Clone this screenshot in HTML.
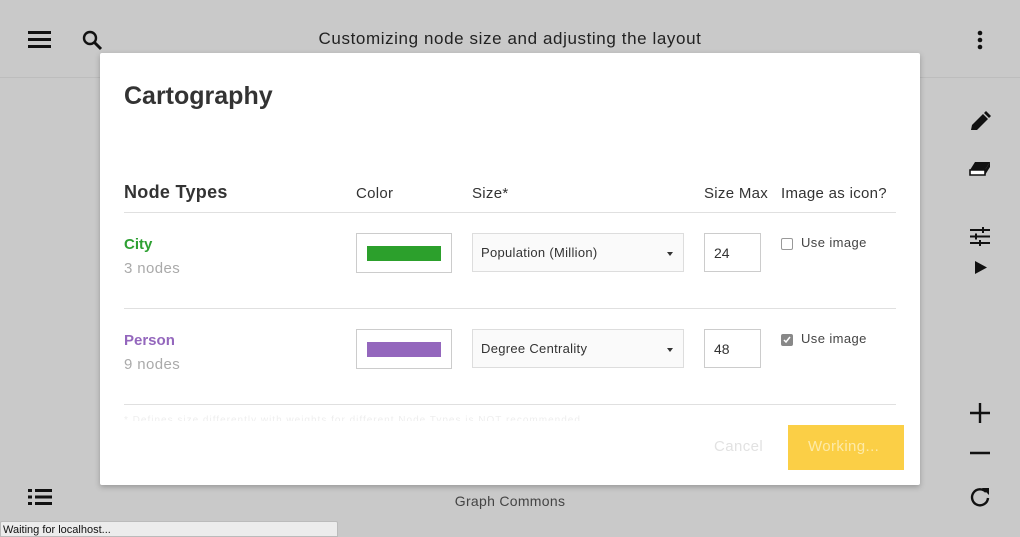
<!DOCTYPE html>
<html><head><meta charset="utf-8"><style>
*{margin:0;padding:0;box-sizing:border-box}
body{width:1020px;height:536px;overflow:hidden;background:#c9c9c9;font-family:"Liberation Sans",sans-serif;position:relative;color:#222}
.abs{position:absolute}
.hline{position:absolute;left:0;width:1020px;top:77px;height:1px;background:#bdbdbd}
.modal{position:absolute;left:100px;top:53px;width:820px;height:432px;background:#fff;border-radius:2px;box-shadow:0 2px 6px rgba(0,0,0,.25)}
.sep{position:absolute;left:24px;width:772px;height:1px;background:#e0e0e0}
.th{position:absolute;top:132px;font-size:15px;color:#333;letter-spacing:.3px}
.sw{position:absolute;left:256px;width:96px;height:40px;border:1px solid #ccc;background:#fff}
.sw div{position:absolute;left:10px;top:12px;width:74px;height:15px}
.sel{position:absolute;left:372px;width:212px;height:39px;border:1px solid #ddd;background:#fafafa;font-size:13px;color:#333;padding:11px 8px;letter-spacing:.3px}
.sel:after{content:"";position:absolute;right:10px;top:18px;border-left:3px solid transparent;border-right:3px solid transparent;border-top:4px solid #333}
.num{position:absolute;left:604px;width:57px;height:39px;border:1px solid #ccc;font-size:14px;color:#333;padding:11px 9px}
.cb{position:absolute;left:681px;width:12px;height:12px;border:1px solid #999;border-radius:2px}
.ui{position:absolute;left:701px;font-size:13px;color:#444;letter-spacing:.4px}
</style></head><body>
<div class="hline"></div>
<svg class="abs" style="left:28px;top:31px" width="24" height="17"><rect y="0" width="23" height="3" fill="#111"/><rect y="7" width="23" height="3" fill="#111"/><rect y="14" width="23" height="3" fill="#111"/></svg>
<svg class="abs" style="left:81px;top:29px" width="24" height="24"><circle cx="9" cy="9" r="6" fill="none" stroke="#111" stroke-width="2.4"/><path d="M13 13l7 7" stroke="#111" stroke-width="3"/></svg>
<div class="abs" style="left:0;width:1020px;top:29px;text-align:center;font-size:17px;letter-spacing:.6px;color:#222">Customizing node size and adjusting the layout</div>
<svg class="abs" style="left:977px;top:30px" width="6" height="20"><circle cx="3" cy="3" r="2.3" fill="#111"/><circle cx="3" cy="10" r="2.3" fill="#111"/><circle cx="3" cy="17" r="2.3" fill="#111"/></svg>
<svg class="abs" style="left:968px;top:110px" width="24" height="24"><path d="M3 20l1-5L15 4l5 5L9 20z" fill="#111"/><path d="M16 3l2-2 5 5-2 2z" fill="#111"/></svg>
<svg class="abs" style="left:968px;top:160px" width="24" height="18"><path d="M7 2h15l-5 8H2z" fill="#111"/><path d="M2 10h15v5H2z" fill="#fff" stroke="#111" stroke-width="1.6"/><path d="M17 10l5-8v5l-5 8" fill="#111"/></svg>
<svg class="abs" style="left:970px;top:227px" width="20" height="20"><path d="M0 3h20M0 9.5h20M0 16h20" stroke="#111" stroke-width="2"/><rect x="12" y="0" width="2" height="6" fill="#111"/><rect x="5" y="6.5" width="2" height="6" fill="#111"/><rect x="9" y="13" width="2" height="6" fill="#111"/></svg>
<svg class="abs" style="left:974px;top:260px" width="14" height="15"><path d="M1 1l12 6.5L1 14z" fill="#111"/></svg>
<svg class="abs" style="left:970px;top:403px" width="20" height="20"><path d="M10 0v20M0 10h20" stroke="#111" stroke-width="2.4"/></svg>
<svg class="abs" style="left:970px;top:450px" width="20" height="6"><path d="M0 3h20" stroke="#111" stroke-width="2.6"/></svg>
<svg class="abs" style="left:969px;top:486px" width="22" height="22"><path d="M17 6A8 8 0 1 0 19 12" fill="none" stroke="#111" stroke-width="2.4"/><path d="M13 2h7v7z" fill="#111"/></svg>
<svg class="abs" style="left:28px;top:489px" width="24" height="16"><rect y="0" width="4" height="3" fill="#111"/><rect y="6.5" width="4" height="3" fill="#111"/><rect y="13" width="4" height="3" fill="#111"/><rect x="7" y="0" width="17" height="3" fill="#111"/><rect x="7" y="6.5" width="17" height="3" fill="#111"/><rect x="7" y="13" width="17" height="3" fill="#111"/></svg>
<div class="abs" style="left:0;width:1020px;top:493px;text-align:center;font-size:14px;letter-spacing:.3px;color:#444">Graph Commons</div>
<div class="abs" style="left:0;top:521px;width:338px;height:16px;background:#ececec;border:1px solid #bbb;border-radius:2px 2px 0 0;font-size:11px;color:#111;padding:2px 2px">Waiting for localhost...</div>

<div class="modal">
<div class="abs" style="left:24px;top:29px;font-size:25px;font-weight:bold;color:#333">Cartography</div>
<div class="th" style="left:24px;top:129px;font-size:18px;font-weight:bold">Node Types</div>
<div class="th" style="left:256px">Color</div>
<div class="th" style="left:372px">Size*</div>
<div class="th" style="left:604px">Size Max</div>
<div class="th" style="left:681px">Image as icon?</div>
<div class="sep" style="top:159px"></div>
<div class="abs" style="left:24px;top:183px;font-size:15px;font-weight:bold;color:#2ea033">City</div>
<div class="abs" style="left:24px;top:207px;font-size:15px;letter-spacing:.4px;color:#aaa">3 nodes</div>
<div class="sw" style="top:180px"><div style="background:#2ca02c"></div></div>
<div class="sel" style="top:180px">Population (Million)</div>
<div class="num" style="top:180px">24</div>
<div class="cb" style="top:185px"></div>
<div class="ui" style="top:182px">Use image</div>
<div class="sep" style="top:255px"></div>
<div class="abs" style="left:24px;top:279px;font-size:15px;font-weight:bold;color:#9467bd">Person</div>
<div class="abs" style="left:24px;top:303px;font-size:15px;letter-spacing:.4px;color:#aaa">9 nodes</div>
<div class="sw" style="top:276px"><div style="background:#9467bd"></div></div>
<div class="sel" style="top:276px">Degree Centrality</div>
<div class="num" style="top:276px">48</div>
<div class="cb" style="top:281px;background:#888;border-color:#888"><svg width="10" height="10" style="position:absolute;left:0;top:0"><path d="M2 5l2 2 4-5" stroke="#fff" stroke-width="1.5" fill="none"/></svg></div>
<div class="ui" style="top:278px">Use image</div>
<div class="sep" style="top:351px"></div>
<div class="abs" style="left:24px;top:362px;font-size:10px;color:#eee;letter-spacing:1px;height:6px;overflow:hidden">* Defines size differently with weights for different Node Types is NOT recommended</div>
<div class="abs" style="left:614px;top:385px;font-size:15px;letter-spacing:.4px;color:#e2e2e2">Cancel</div>
<div class="abs" style="left:688px;top:372px;width:116px;height:45px;background:#fbcf46;color:#fdeaa8;font-size:15px;letter-spacing:.4px;padding:13px 20px">Working...</div>
</div>
</body></html>
